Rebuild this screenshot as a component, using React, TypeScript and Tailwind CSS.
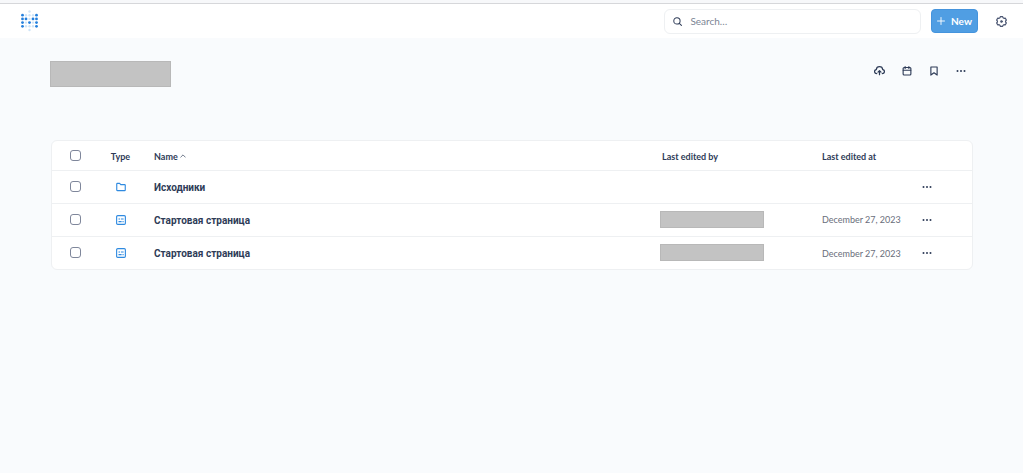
import type { ReactNode } from "react";

interface CollectionItem {
  id: number;
  kind: "folder" | "dashboard";
  name: string;
  editedAt?: string;
}

const ITEMS: CollectionItem[] = [
  { id: 1, kind: "folder", name: "Исходники" },
  { id: 2, kind: "dashboard", name: "Стартовая страница", editedAt: "December 27, 2023" },
  { id: 3, kind: "dashboard", name: "Стартовая страница", editedAt: "December 27, 2023" }
];

// ────────────────────────────────────────────────────────────────────
// Icons
// ────────────────────────────────────────────────────────────────────

// One string per row of the dot grid: "#" strong, "." faint, " " empty.
const LOGO_ROWS = ["  .  ", "#...#", "##.##", "#.#.#", "#...#", "  .  "];

function Logo() {
  return (
    <svg viewBox="0 0 19 23" className="h-[23px] w-[19px]" aria-hidden="true">
      {LOGO_ROWS.flatMap((row, y) =>
        row.split("").map((dot, x) =>
          dot === " " ? null : (
            <circle
              key={`${x}-${y}`}
              cx={2.5 + x * 3.5}
              cy={1.5 + y * 3.7}
              r={dot === "#" ? 1.4 : 1.2}
              fill={dot === "#" ? "#2480dd" : "#cfe4f7"}
            />
          )
        )
      )}
    </svg>
  );
}

function Icon({ children, className }: { children: ReactNode; className: string }) {
  return (
    <svg
      viewBox="0 0 16 16"
      fill="none"
      stroke="currentColor"
      strokeWidth={1.8}
      strokeLinecap="round"
      strokeLinejoin="round"
      className={className}
      aria-hidden="true"
    >
      {children}
    </svg>
  );
}

function SearchIcon() {
  return (
    <Icon className="size-[9px] shrink-0">
      <circle cx="7" cy="7" r="5.6" />
      <path d="m11.2 11.2 3.8 3.8" />
    </Icon>
  );
}

function GearIcon() {
  return (
    <Icon className="size-[11px]">
      <path
        strokeWidth={1.7}
        d="M6.3 1h3.4l.6 1.7 1.2.7 1.9-.4 1.7 3-1.2 1.3v1.4l1.2 1.3-1.7 3-1.9-.4-1.2.7-.6 1.7H6.3l-.6-1.7-1.2-.7-1.9.4-1.7-3 1.2-1.3V7.3L.9 6l1.7-3 1.9.4 1.2-.7z"
      />
      <circle cx="8" cy="8" r="1.5" fill="currentColor" strokeWidth={1} />
    </Icon>
  );
}

function UploadIcon() {
  return (
    <Icon className="size-[11px]">
      <path d="M4 12.5c-2 0-3.2-1.3-3.2-3C.8 8 1.9 6.9 3.3 6.7 3.6 4.2 5.5 2.5 8 2.5s4.4 1.700 4.700 4.200c1.400.2 2.500 1.300 2.500 2.800 0 1.700-1.200 3-3.200 3" />
      <path d="M8 14V8.500M5.800 10.300 8 8.100l2.200 2.200" />
    </Icon>
  );
}

function CalendarIcon() {
  return (
    <Icon className="size-[10px]">
      <rect x="1.8" y="2.4" width="12.4" height="12" rx="1.6" />
      <path d="M2 6.8h12M5 1v3M11 1v3" />
    </Icon>
  );
}

function BookmarkIcon() {
  return (
    <Icon className="size-[10px]">
      <path d="M3 1.5h10v13l-5-3.7-5 3.7z" />
    </Icon>
  );
}

function EllipsisIcon() {
  return (
    <svg viewBox="0 0 10 10" fill="currentColor" className="size-[10px]" aria-hidden="true">
      <circle cx="1.5" cy="5" r="1" />
      <circle cx="5" cy="5" r="1" />
      <circle cx="8.5" cy="5" r="1" />
    </svg>
  );
}

function FolderIcon() {
  return (
    <Icon className="size-[10px]">
      <path d="M1.2 3.2c0-.6.4-1 1-1h3.600l1.800 2h6.200c.6 0 1 .4 1 1v7.600c0 .6-.4 1-1 1H2.200c-.6 0-1-.4-1-1z" />
    </Icon>
  );
}

function DashboardIcon() {
  return (
    <Icon className="size-[10px]">
      <rect x="1" y="1" width="14" height="14" rx="1.8" />
      <path strokeLinecap="butt" d="M4 6.400h2.400M7.800 6.400H12.200M4 10.600h5M10.400 10.600h1.800" />
    </Icon>
  );
}

// ────────────────────────────────────────────────────────────────────
// Page pieces
// ────────────────────────────────────────────────────────────────────

function IconButton({ label, children }: { label: string; children: ReactNode }) {
  return (
    <button type="button" aria-label={label} className="flex size-[11px] items-center justify-center">
      {children}
    </button>
  );
}

function Checkbox({ label }: { label: string }) {
  return (
    <input
      type="checkbox"
      aria-label={label}
      className="mx-auto block size-[11px] appearance-none rounded-[3px] border border-[#7f879b] bg-white checked:bg-[#509ee3]"
    />
  );
}

function AppBar() {
  return (
    <header className="flex h-[34px] items-center bg-white pr-4 pl-5">
      <a href="#" aria-label="Home">
        <Logo />
      </a>
      <label className="mr-[10px] ml-auto flex h-[25px] w-[26%] items-center gap-2 rounded-md border border-[#eef0f2] px-2 text-[#2e3b57]">
        <SearchIcon />
        <input
          type="text"
          aria-label="Search"
          placeholder="Search…"
          className="w-full min-w-0 bg-transparent text-[10px] outline-none placeholder:text-[#7b8494]"
        />
      </label>
      <button
        type="button"
        className="flex h-6 w-[47px] items-center justify-center gap-[6px] rounded-sm border border-[#4594dd] bg-[#509ee3] text-[10px] font-bold text-white"
      >
        <Icon className="size-2">
          <path d="M8 1v14M1 8h14" />
        </Icon>
        New
      </button>
      <button type="button" aria-label="Settings" className="ml-[18px] text-[#4c5773]">
        <GearIcon />
      </button>
    </header>
  );
}

function ItemRow({ item }: { item: CollectionItem }) {
  return (
    <tr className="h-[33px] border-t border-[#eef0f2]">
      <td>
        <Checkbox label={`Select ${item.name}`} />
      </td>
      <td>
        <span className="flex justify-center text-[#2f8ae0]">
          {item.kind === "folder" ? <FolderIcon /> : <DashboardIcon />}
        </span>
      </td>
      <td className="pt-px pl-3">
        <a href="#" className="font-[Roboto,sans-serif] text-[10px] font-bold">
          {item.name}
        </a>
      </td>
      <td className="pl-[10px]">
        {item.editedAt ? <div className="h-[17px] w-[104px] border border-[#b8b8b8] bg-[#c3c3c3]" /> : null}
      </td>
      <td className="pt-px pl-3 whitespace-nowrap text-[#696e7b]">{item.editedAt}</td>
      <td className="pl-[11px]">
        <IconButton label={`Actions for ${item.name}`}>
          <EllipsisIcon />
        </IconButton>
      </td>
    </tr>
  );
}

export default function App() {
  return (
    <div className="min-h-screen bg-[#f9fbfd] font-[Lato,'Liberation_Sans',sans-serif] text-[9px] text-[#2e3b57]">
      <div className="h-1 border-b border-[#d6d7da] bg-[#f7f8fa]" />
      <AppBar />
      <main className="pr-[50px] pl-[51px]">
        <div className="flex items-start justify-between pt-[23px] pr-[7px]">
          <div className="-ml-px h-[26px] w-[121px] border border-[#b8b8b8] bg-[#c3c3c3]" />
          <div className="flex items-center gap-4 pt-1">
            <IconButton label="Upload data">
              <UploadIcon />
            </IconButton>
            <IconButton label="Events">
              <CalendarIcon />
            </IconButton>
            <IconButton label="Bookmark">
              <BookmarkIcon />
            </IconButton>
            <IconButton label="More">
              <EllipsisIcon />
            </IconButton>
          </div>
        </div>
        <div className="mt-[53px] overflow-hidden rounded-md border border-[#eef0f2] bg-white">
          <table className="w-full table-fixed border-collapse text-left">
            <thead>
              <tr className="h-[29px]">
                <th className="w-[47px]">
                  <Checkbox label="Select all" />
                </th>
                <th className="w-[43px] pt-[2px] text-center font-bold">Type</th>
                <th className="pt-[2px] pl-3 font-bold">
                  <button type="button" className="flex items-center gap-[2px]">
                    Name
                    <Icon className="size-[6px]">
                      <path d="m2 11 6-6 6 6" />
                    </Icon>
                  </button>
                </th>
                <th className="w-[160px] pt-[2px] pl-3 font-bold">Last edited by</th>
                <th className="w-[100px] pt-[2px] pl-3 font-bold">Last edited at</th>
                <th className="w-[62px]" aria-label="Actions" />
              </tr>
            </thead>
            <tbody>
              {ITEMS.map(item => (
                <ItemRow key={item.id} item={item} />
              ))}
            </tbody>
          </table>
        </div>
      </main>
    </div>
  );
}
